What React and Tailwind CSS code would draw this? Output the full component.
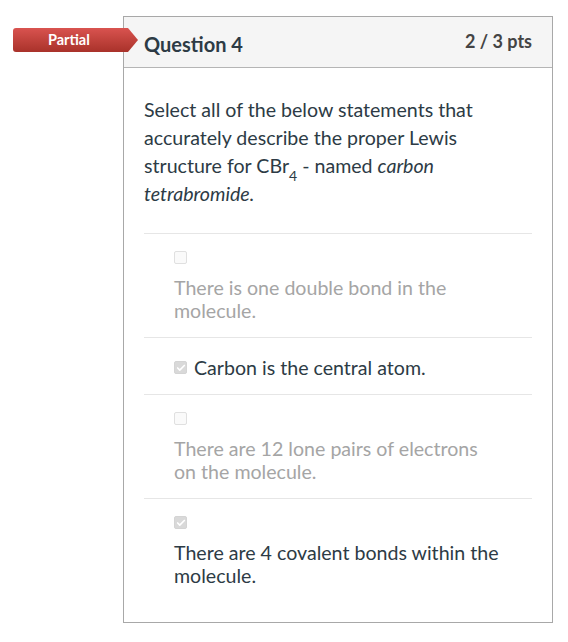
import { Check } from "lucide-react";

const answers = [
  { text: "There is one double bond in the molecule.", checked: false, selected: false },
  { text: "Carbon is the central atom.", checked: true, selected: true, inline: true },
  { text: "There are 12 lone pairs of electrons on the molecule.", checked: false, selected: false },
  { text: "There are 4 covalent bonds within the molecule.", checked: true, selected: true },
];

function Box({ checked }) {
  return (
    <span
      className={
        "flex h-[13px] w-[13px] shrink-0 items-center justify-center rounded-[2px] border " +
        (checked ? "border-[#d4d4d4] bg-[#d9d9d9]" : "border-[#e0e0e0] bg-[#fafafa]")
      }
    >
      {checked && <Check className="h-[10px] w-[10px] text-white" strokeWidth={4} />}
    </span>
  );
}

function Answer({ answer }) {
  const color = answer.selected ? "text-[#2d3b45]" : "text-[#a5a5a5]";
  if (answer.inline) {
    return (
      <li className="border-t border-[#e6e6e6] pl-[30px] pt-[18px] pb-[15px]">
        <div className={"flex items-center gap-[7px] text-[19.6px] leading-[23px] " + color}>
          <Box checked={answer.checked} />
          <span>{answer.text}</span>
        </div>
      </li>
    );
  }
  return (
    <li className="border-t border-[#e6e6e6] pl-[30px] pt-[17px] pb-[15px]">
      <div className="flex h-[13px]">
        <Box checked={answer.checked} />
      </div>
      <p className={"mt-[12px] w-[326px] text-[19.6px] leading-[23px] " + color}>
        {answer.text}
      </p>
    </li>
  );
}

export default function App() {
  return (
    <div className="min-h-[642px] bg-white pt-[16px] font-['Lato',sans-serif]">
      <div className="relative ml-[123px] w-[430px] border border-[#a8a8a8] bg-white">
        <div
          className="absolute left-[-111px] top-[11px] flex h-[24px] w-[125px] items-center bg-gradient-to-b from-[#d9534f] to-[#a9322a] pl-[35px] text-[14.5px] font-bold text-white [clip-path:polygon(0_0,115px_0,125px_50%,115px_100%,0_100%)]"
          style={{ borderRadius: "3px 0 0 3px" }}
        >
          Partial
        </div>
        <div className="flex h-[51px] items-start justify-between border-b border-[#b5b5b5] bg-[#f5f5f5] px-[20px] pt-[14px]">
          <h2 className="text-[20px] font-bold leading-[26px] text-[#2d3b45]">Question 4</h2>
          <span className="mt-[-1px] text-[18px] font-bold leading-[22px] text-[#444]">2 / 3 pts</span>
        </div>
        <div className="px-[20px] pt-[28px] pb-[20px]">
          <p className="text-[19.6px] leading-[28px] text-[#2d3b45]">
            Select all of the below statements that accurately describe the proper Lewis
            structure for CBr<sub className="align-[-4px] text-[14px] leading-none">4</sub> - named{" "}
            <em>carbon tetrabromide.</em>
          </p>
          <ul className="mt-[25px]">
            {answers.map((a) => (
              <Answer key={a.text} answer={a} />
            ))}
          </ul>
        </div>
      </div>
    </div>
  );
}
